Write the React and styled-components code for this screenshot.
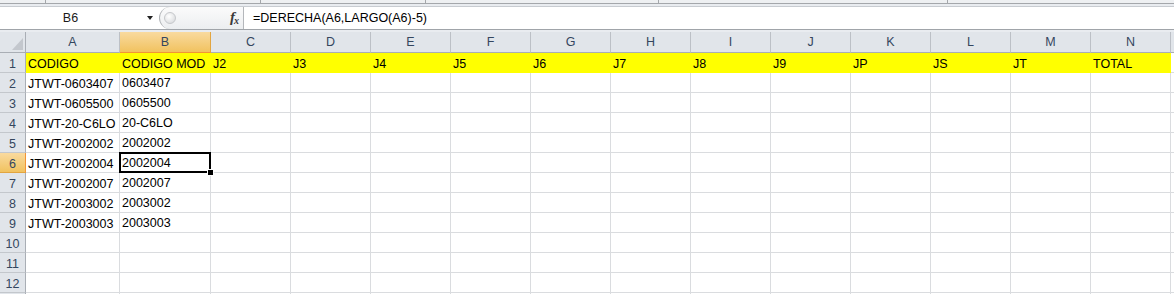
import React from "react";
import styled, { createGlobalStyle } from "styled-components";

const GlobalStyle = createGlobalStyle`
  *, *::before, *::after { box-sizing: border-box; }
  html, body { margin: 0; padding: 0; background: #fff; overflow: hidden; }
  body {
    font-family: "Liberation Sans", Arial, sans-serif;
    font-size: 12.5px;
    color: #000;
  }
`;

const COLS = "26px 94px 91px repeat(12, 80px) 80px";

const Page = styled.div`
  width: 1174px;
  height: 294px;
  overflow: hidden;
  display: flex;
  flex-direction: column;
`;

const TopStrip = styled.div`
  height: 4px;
  flex-shrink: 0;
  display: flex;
  background: #eef0f2;
  border-bottom: 1px solid #a4a7ab;
`;

const StripSeg = styled.div`
  width: ${(p) => p.$w}px;
  flex-shrink: 0;
  border-right: 1px solid #a4a7ab;
`;

const FormulaBar = styled.div`
  height: 28px;
  flex-shrink: 0;
  padding: 2px 0;
  background: #e9ecf0;
  display: flex;
`;

const FormulaRow = styled.div`
  flex: 1;
  display: flex;
  background: #fff;
  border-top: 1px solid #c8ccd1;
  border-bottom: 1px solid #a0a4a9;
`;

const NameBox = styled.div`
  width: 159px;
  flex-shrink: 0;
  display: flex;
  align-items: center;
`;

const NameText = styled.div`
  width: 141px;
  text-align: center;
  color: #1a1a1a;
`;

const DropArrow = styled.div`
  flex: 1;
  display: flex;
  align-items: center;
  justify-content: center;
  &::after {
    content: "";
    border-left: 3.5px solid transparent;
    border-right: 3.5px solid transparent;
    border-top: 4px solid #222;
  }
`;

const FxPanel = styled.div`
  width: 85px;
  flex-shrink: 0;
  display: flex;
  align-items: center;
  background: linear-gradient(#fbfbfb, #eceef0);
  border-left: 1px solid #aeb1b5;
  border-right: 1px solid #b4b7bb;
  border-radius: 11px 0 0 11px;
`;

const Knob = styled.div`
  width: 12px;
  height: 12px;
  margin-left: 4px;
  border-radius: 50%;
  border: 1px solid #c6c8cb;
  background: radial-gradient(circle at 40% 35%, #ffffff, #d3d5d8);
`;

const FxLabel = styled.div`
  margin-left: auto;
  margin-right: 5px;
  font-family: "Liberation Serif", "Times New Roman", serif;
  font-style: italic;
  font-weight: bold;
  font-size: 15px;
  color: #3a3a3a;
  line-height: 1;
  letter-spacing: -1px;
  & > span {
    font-size: 10px;
    vertical-align: -2px;
  }
`;

const FormulaInput = styled.div`
  flex: 1;
  display: flex;
  align-items: center;
  padding-left: 9px;
  white-space: nowrap;
`;

const Sheet = styled.div`
  display: flex;
  flex-direction: column;
`;

const HeaderRow = styled.div`
  display: grid;
  grid-template-columns: ${COLS};
  height: 21px;
  flex-shrink: 0;
`;

const Row = styled.div`
  display: grid;
  grid-template-columns: ${COLS};
  height: 20px;
  flex-shrink: 0;
`;

const Corner = styled.div`
  background: #e1e5ea;
  border-right: 1px solid #a9aeb5;
  border-bottom: 1px solid #a9aeb5;
  display: flex;
  align-items: flex-end;
  justify-content: flex-end;
  padding: 0 2px 2px 0;
`;

const ColHeader = styled.div`
  display: flex;
  align-items: center;
  justify-content: center;
  color: #34465e;
  background: ${(p) =>
    p.$sel ? "linear-gradient(#f9da9f, #f1c25f)" : "#e1e5ea"};
  border-right: 1px solid ${(p) => (p.$sel ? "#e2a540" : "#bcc0c6")};
  border-bottom: 1px solid ${(p) => (p.$sel ? "#f29436" : "#a9aeb5")};
`;

const RowHeader = styled.div`
  display: flex;
  align-items: flex-end;
  justify-content: center;
  line-height: 15px;
  color: #34465e;
  background: ${(p) =>
    p.$sel ? "linear-gradient(#f9da9f, #f1c25f)" : "#e1e5ea"};
  border-right: 1px solid ${(p) => (p.$sel ? "#f29436" : "#a9aeb5")};
  border-bottom: 1px solid ${(p) => (p.$sel ? "#e2a540" : "#c3c7cc")};
`;

const Cell = styled.div`
  position: relative;
  display: flex;
  align-items: flex-end;
  padding: 0 0 ${(p) => (p.$raise ? 1 : 0)}px 2px;
  line-height: 15px;
  white-space: nowrap;
  background: ${(p) => (p.$fill ? "#ffff00" : "#fff")};
  border-right: 1px solid ${(p) => (p.$fill ? "#ffff00" : "#dadcdf")};
  border-bottom: 1px solid ${(p) => (p.$fill ? "#ffff00" : "#dadcdf")};
`;

const Selection = styled.div`
  position: absolute;
  z-index: 5;
  left: -1px;
  top: -1px;
  right: -1px;
  bottom: -1px;
  border: 2px solid #000;
  pointer-events: none;
`;

const FillHandle = styled.div`
  position: absolute;
  right: -5px;
  bottom: -5px;
  width: 7px;
  height: 7px;
  background: #000;
  border: 1px solid #fff;
`;

const LETTERS = ["A", "B", "C", "D", "E", "F", "G", "H", "I", "J", "K", "L", "M", "N", ""];

const HEAD = ["CODIGO", "CODIGO MOD", "J2", "J3", "J4", "J5", "J6", "J7", "J8", "J9", "JP", "JS", "JT", "TOTAL"];

const DATA = [
  ["JTWT-0603407", "0603407"],
  ["JTWT-0605500", "0605500"],
  ["JTWT-20-C6LO", "20-C6LO"],
  ["JTWT-2002002", "2002002"],
  ["JTWT-2002004", "2002004"],
  ["JTWT-2002007", "2002007"],
  ["JTWT-2003002", "2003002"],
  ["JTWT-2003003", "2003003"],
  [],
  [],
  [],
  [],
];

const strip = [46, 215, 165, 233, 289];

export default function App() {
  return (
    <Page>
      <GlobalStyle />
      <TopStrip>
        {strip.map((w, i) => (
          <StripSeg key={i} $w={w} />
        ))}
      </TopStrip>
      <FormulaBar>
        <FormulaRow>
          <NameBox>
            <NameText>B6</NameText>
            <DropArrow />
          </NameBox>
          <FxPanel>
            <Knob />
            <FxLabel>
              f<span>x</span>
            </FxLabel>
          </FxPanel>
          <FormulaInput>=DERECHA(A6,LARGO(A6)-5)</FormulaInput>
        </FormulaRow>
      </FormulaBar>
      <Sheet>
        <HeaderRow>
          <Corner>
            <svg width="11" height="12" viewBox="0 0 11 12">
              <polygon points="11,0 11,12 0,12" fill="#c3c7cd" />
            </svg>
          </Corner>
          {LETTERS.map((l, i) => (
            <ColHeader key={i} $sel={l === "B"}>
              {l}
            </ColHeader>
          ))}
        </HeaderRow>
        <Row>
          <RowHeader>1</RowHeader>
          {HEAD.map((t, i) => (
            <Cell key={i} $fill>
              {t}
            </Cell>
          ))}
          <Cell />
        </Row>
        {DATA.map((r, ri) => {
          const n = ri + 2;
          return (
            <Row key={n}>
              <RowHeader $sel={n === 6}>{n}</RowHeader>
              {LETTERS.map((_, ci) => (
                <Cell key={ci} $raise={ci === 1}>
                  {r[ci] || ""}
                  {n === 6 && ci === 1 && (
                    <Selection>
                      <FillHandle />
                    </Selection>
                  )}
                </Cell>
              ))}
            </Row>
          );
        })}
        <Row>
          <RowHeader />
          {LETTERS.map((_, ci) => (
            <Cell key={ci} />
          ))}
        </Row>
      </Sheet>
    </Page>
  );
}
